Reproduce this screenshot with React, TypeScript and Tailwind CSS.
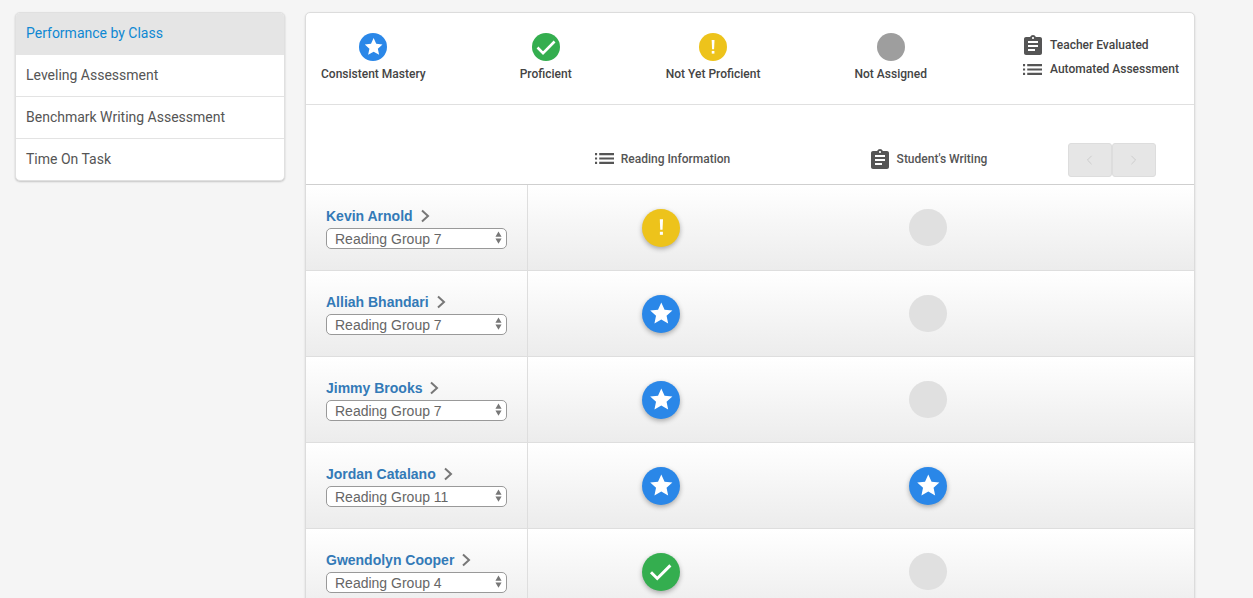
import { FC } from "react";

type Status = "mastery" | "proficient" | "notYet" | "none";

const ClipboardIcon: FC<{ className?: string }> = ({ className }) => (
  <svg viewBox="3 1 18 20" className={className} fill="currentColor">
    <path d="M19 3h-4.18C14.4 1.84 13.3 1 12 1c-1.3 0-2.4.84-2.82 2H5c-1.1 0-2 .9-2 2v14c0 1.1.9 2 2 2h14c1.1 0 2-.9 2-2V5c0-1.1-.9-2-2-2zm-7 0c.55 0 1 .45 1 1s-.45 1-1 1-1-.45-1-1 .45-1 1-1zm2 14H7v-2h7v2zm3-4H7v-2h10v2zm0-4H7V7h10v2z" />
  </svg>
);

const ListIcon: FC<{ className?: string }> = ({ className }) => (
  <svg viewBox="3 7 18 10" className={className} fill="currentColor" preserveAspectRatio="none">
    <path d="M3 13h2v-2H3v2zm0 4h2v-2H3v2zm0-8h2V7H3v2zm4 4h14v-2H7v2zm0 4h14v-2H7v2zM7 7v2h14V7H7z" />
  </svg>
);

const StatusGlyph: FC<{ status: Status; large?: boolean }> = ({ status, large }) => {
  if (status === "mastery") {
    return (
      <svg viewBox="0 0 24 24" className={large ? "w-[70%] h-[70%]" : "w-[76%] h-[76%]"} fill="#fff">
        <path d="M12 2.2l2.95 6.5 7.05.8-5.25 4.75 1.45 7-6.2-3.55-6.2 3.55 1.45-7L2 9.5l7.05-.8z" />
      </svg>
    );
  }
  if (status === "proficient") {
    return (
      <svg
        viewBox="0 0 24 24"
        className={large ? "w-[72%] h-[72%]" : "w-[86%] h-[86%]"}
        fill="none"
        stroke="#fff"
        strokeWidth="2.6"
      >
        <path d="M3.5 12.5l5.5 5.5L20.5 6.5" />
      </svg>
    );
  }
  if (status === "notYet") {
    return (
      <svg viewBox="0 0 24 24" className={large ? "w-[60%] h-[60%]" : "w-[72%] h-[72%]"} fill="#fff">
        <path d="M10.3 3.5h3.4l-.5 11h-2.4z" />
        <rect x="10.4" y="16.6" width="3.2" height="3.2" />
      </svg>
    );
  }
  return null;
};

const statusColors: Record<Status, string> = {
  mastery: "bg-[#2a87e8]",
  proficient: "bg-[#34ae4f]",
  notYet: "bg-[#edc31b]",
  none: "bg-[#9e9e9e]",
};

const LegendItem: FC<{ status: Status; label: string }> = ({ status, label }) => (
  <div className="flex flex-col items-center gap-[6px]">
    <div className={`flex justify-center items-center rounded-full w-[28px] h-[28px] ${statusColors[status]}`}>
      <StatusGlyph status={status} />
    </div>
    <span className="font-medium text-[#444] text-[12px] leading-[14px]">{label}</span>
  </div>
);

const Badge: FC<{ status: Status }> = ({ status }) =>
  status === "none" ? (
    <div className="bg-[#e0e0e0] rounded-full w-[38px] h-[37px]" />
  ) : (
    <div
      className={`flex justify-center items-center rounded-full w-[38px] h-[38px] shadow-[0_2px_5px_rgba(0,0,0,0.3)] ${statusColors[status]}`}
    >
      <StatusGlyph status={status} large />
    </div>
  );

const students: { name: string; group: string; reading: Status; writing: Status }[] = [
  { name: "Kevin Arnold", group: "Reading Group 7", reading: "notYet", writing: "none" },
  { name: "Alliah Bhandari", group: "Reading Group 7", reading: "mastery", writing: "none" },
  { name: "Jimmy Brooks", group: "Reading Group 7", reading: "mastery", writing: "none" },
  { name: "Jordan Catalano", group: "Reading Group 11", reading: "mastery", writing: "mastery" },
  { name: "Gwendolyn Cooper", group: "Reading Group 4", reading: "proficient", writing: "none" },
];

const StudentRow: FC<{ name: string; group: string; reading: Status; writing: Status }> = ({
  name,
  group,
  reading,
  writing,
}) => (
  <div className="grid grid-cols-[222px_266px_268px_1fr] bg-gradient-to-b from-white to-[#ececec] border-[#dedede] border-b h-[86px] shrink-0">
    <div className="flex flex-col border-[#dedede] border-r pt-[21px] pl-[20px]">
      <div className="flex items-center gap-[7px] h-[20px]">
        <span className="font-bold text-[#337ab7] text-[14px] font-['Liberation_Sans',sans-serif]">{name}</span>
        <svg viewBox="0 0 10 14" className="w-[10px] h-[14px]" fill="none" stroke="#777" strokeWidth="2">
          <path d="M2 1.5L8 7l-6 5.5" />
        </svg>
      </div>
      <div className="relative mt-[1px] w-[181px] h-[21px]">
        <select
          defaultValue={group}
          className="bg-white pl-[8px] border border-[#999] rounded-[5px] w-full h-full text-[#666] text-[14px] appearance-none font-['Liberation_Sans',sans-serif]"
        >
          <option>{group}</option>
        </select>
        <svg viewBox="0 0 8 14" className="top-[4px] right-[5px] absolute w-[7px] h-[13px]" fill="#777">
          <path d="M4 0l3.5 6H.5zM4 14L.5 8h7z" />
        </svg>
      </div>
    </div>
    <div className="flex justify-center items-center">
      <Badge status={reading} />
    </div>
    <div className="flex justify-center items-center">
      <Badge status={writing} />
    </div>
    <div />
  </div>
);

const menuItems = ["Leveling Assessment", "Benchmark Writing Assessment", "Time On Task"];

export default function App() {
  return (
    <div className="flex items-start gap-[20px] bg-[#f5f5f5] pt-[12px] pl-[15px] w-[1253px] h-[598px] overflow-hidden font-['Roboto',sans-serif]">
      <div className="bg-white shadow-[0_1px_2px_rgba(0,0,0,0.2)] border border-[#e0e0e0] rounded-[5px] w-[270px] overflow-hidden shrink-0">
        <div className="flex items-center bg-[#e5e5e5] px-[10px] pb-[1px] h-[42px] text-[#0e88d3] text-[14px]">
          Performance by Class
        </div>
        {menuItems.map((item, i) => (
          <div
            key={item}
            className={`flex items-center px-[10px] text-[#555] text-[14px] ${i > 0 ? "h-[42px] border-t border-[#e3e3e3]" : "h-[41px]"}`}
          >
            {item}
          </div>
        ))}
      </div>

      <div className="flex flex-col bg-white shadow-[0_1px_2px_rgba(0,0,0,0.15)] border border-[#dcdcdc] rounded-[5px] w-[890px] h-[700px] overflow-hidden shrink-0">
        <div className="flex justify-between items-start border-[#e0e0e0] border-b px-[15px] pt-[20px] h-[92px] shrink-0">
          <LegendItem status="mastery" label="Consistent Mastery" />
          <LegendItem status="proficient" label="Proficient" />
          <LegendItem status="notYet" label="Not Yet Proficient" />
          <LegendItem status="none" label="Not Assigned" />
          <div className="flex flex-col gap-[8px] ml-[2px] pt-[2px] font-medium text-[#444] text-[12px]">
            <div className="flex items-center gap-[8px] pl-[1px] h-[20px]">
              <ClipboardIcon className="w-[18px] h-[20px] text-[#555]" />
              <span>Teacher Evaluated</span>
            </div>
            <div className="flex items-center gap-[8px] h-[12px]">
              <ListIcon className="w-[19px] h-[11px] text-[#555]" />
              <span>Automated Assessment</span>
            </div>
          </div>
        </div>

        <div className="grid grid-cols-[222px_266px_268px_1fr] border-[#cfcfcf] border-b h-[80px] shrink-0">
          <div />
          <div className="flex justify-center items-center gap-[7px] pt-[28px] pl-[3px] font-medium text-[#555] text-[12px]">
            <ListIcon className="w-[19px] h-[11px] text-[#555]" />
            <span>Reading Information</span>
          </div>
          <div className="flex justify-center items-center gap-[8px] pt-[28px] pl-[2px] font-medium text-[#555] text-[12px]">
            <ClipboardIcon className="w-[18px] h-[20px] text-[#555]" />
            <span>Student's Writing</span>
          </div>
          <div className="flex pt-[38px] pl-[6px]">
            <button className="flex justify-center items-center bg-[#e6e6e6] pr-[2px] border border-[#dddddd] rounded-[3px] w-[44px] h-[34px]">
              <svg viewBox="0 0 8 12" className="w-[7px] h-[10px]" fill="none" stroke="#cccccc" strokeWidth="1.2">
                <path d="M6.5 1L1.5 6l5 5" />
              </svg>
            </button>
            <button className="flex justify-center items-center bg-[#e6e6e6] pr-[2px] border border-[#dddddd] rounded-[3px] w-[44px] h-[34px]">
              <svg viewBox="0 0 8 12" className="w-[7px] h-[10px]" fill="none" stroke="#cccccc" strokeWidth="1.2">
                <path d="M1.5 1l5 5-5 5" />
              </svg>
            </button>
          </div>
        </div>

        {students.map((s) => (
          <StudentRow key={s.name} {...s} />
        ))}
      </div>
    </div>
  );
}
